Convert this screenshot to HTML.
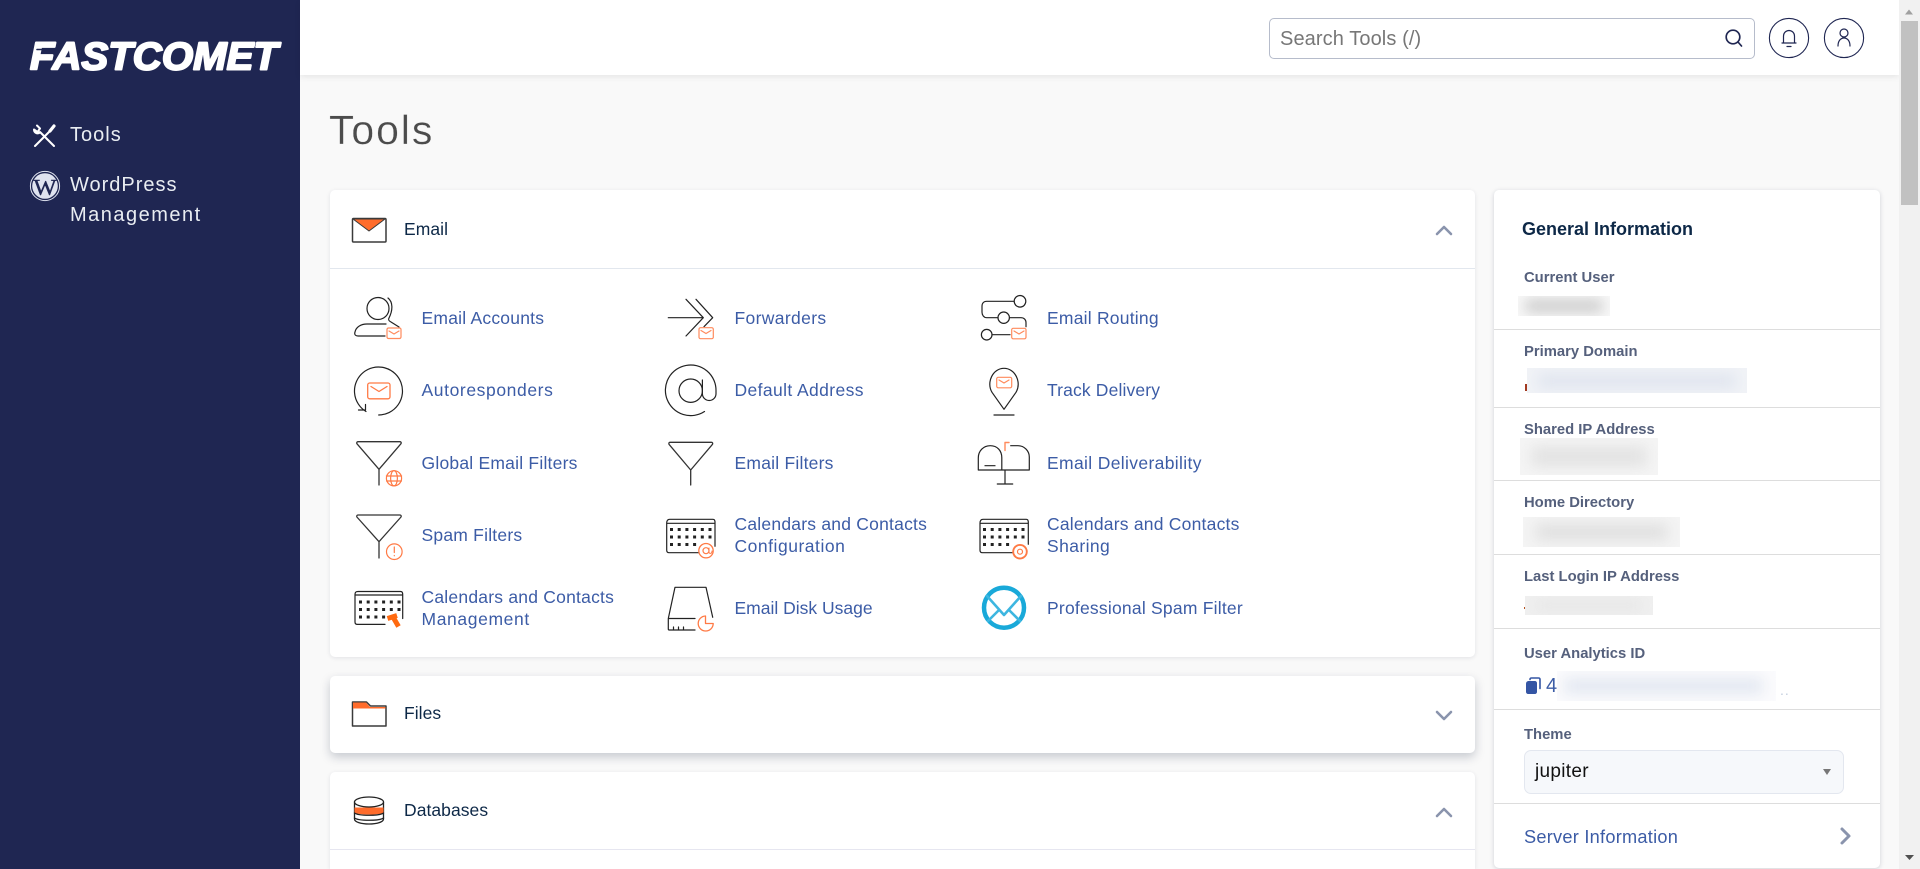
<!DOCTYPE html>
<html lang="en"><head><meta charset="utf-8"><title>Tools</title>
<style>
html,body{margin:0;padding:0;width:1920px;height:869px;overflow:hidden;background:#f9f9f9;font-family:"Liberation Sans",sans-serif}
body{position:relative}
#side{position:absolute;left:0;top:0;width:300px;height:869px;background:#1f2652}
#top{position:absolute;left:300px;top:0;width:1599px;height:75px;background:#fff;box-shadow:0 2px 6px rgba(0,0,0,.08)}
#track{position:absolute;left:1899px;top:0;width:21px;height:869px;background:#f1f1f1}
#thumb{position:absolute;left:1901px;top:21px;width:17px;height:184px;background:#c1c1c1}
.panel{position:absolute;background:#fff;border-radius:5px;box-shadow:0 1px 4px rgba(20,30,60,.1)}
.hr{position:absolute;height:1px;background:#e2e7ee}
.t{position:absolute;white-space:nowrap;line-height:24px;font-size:17.5px;letter-spacing:.22px}
.l{color:#3c5ca6}
.h{color:#0d2847;letter-spacing:.05px}
.s{color:#e9edf2;font-size:20px;letter-spacing:1px}
.k{color:#55607c;font-size:14.8px;font-weight:bold;letter-spacing:0}
.bl{position:absolute;overflow:hidden;background:#f9f9f9}
.bl i{position:absolute;left:8%;right:8%;top:22%;bottom:22%;filter:blur(7px)}
#sel{position:absolute;left:1524px;top:750px;width:318px;height:42px;background:#f6f8fb;border:1px solid #e3e7ef;border-radius:7px}
#search{position:absolute;left:1269px;top:18px;width:484px;height:39px;background:#fff;border:1px solid #b6bccb;border-radius:5px}
svg#ov{position:absolute;left:0;top:0;width:1920px;height:869px;pointer-events:none}
</style></head><body>
<div id="side"></div>
<div id="top"></div>
<div id="search"></div>
<div class="t" style="left:1280px;top:26.500px;font-size:20px;color:#777;letter-spacing:.1px">Search Tools (/)</div>
<div id="track"></div><div id="thumb"></div>

<div class="t s" style="left:70px;top:122.500px">Tools</div>
<div class="t s" style="left:70px;top:172.500px">WordPress</div>
<div class="t s" style="left:70px;top:202.500px;letter-spacing:1.5px">Management</div>

<div class="t" style="left:329px;top:106px;font-size:41px;line-height:48px;color:#4c4c4c;letter-spacing:1.9px;-webkit-text-stroke:.3px #f9f9f9">Tools</div>

<!-- Email panel -->
<div class="panel" style="left:330px;top:190px;width:1145px;height:467px"></div>
<div class="hr" style="left:330px;top:268px;width:1145px"></div>
<div class="t h" style="left:404px;top:216.500px">Email</div>
<div class="t l" style="left:421.500px;top:305.500px">Email Accounts</div>
<div class="t l" style="left:734.500px;top:305.500px;letter-spacing:.35px">Forwarders</div>
<div class="t l" style="left:1047px;top:305.500px">Email Routing</div>
<div class="t l" style="left:421.500px;top:378px;letter-spacing:.6px">Autoresponders</div>
<div class="t l" style="left:734.500px;top:378px;letter-spacing:.39px">Default Address</div>
<div class="t l" style="left:1047px;top:378px;letter-spacing:.14px">Track Delivery</div>
<div class="t l" style="left:421.500px;top:450.500px">Global Email Filters</div>
<div class="t l" style="left:734.500px;top:450.500px">Email Filters</div>
<div class="t l" style="left:1047px;top:450.500px;letter-spacing:.35px">Email Deliverability</div>
<div class="t l" style="left:421.500px;top:523px">Spam Filters</div>
<div class="t l" style="left:734.500px;top:511.500px">Calendars and Contacts</div>
<div class="t l" style="left:734.500px;top:534px;letter-spacing:.52px">Configuration</div>
<div class="t l" style="left:1047px;top:511.500px">Calendars and Contacts</div>
<div class="t l" style="left:1047px;top:534px;letter-spacing:.4px">Sharing</div>
<div class="t l" style="left:421.500px;top:584.500px">Calendars and Contacts</div>
<div class="t l" style="left:421.500px;top:607px;letter-spacing:.62px">Management</div>
<div class="t l" style="left:734.500px;top:596px;letter-spacing:0">Email Disk Usage</div>
<div class="t l" style="left:1047px;top:596px">Professional Spam Filter</div>

<!-- Files -->
<div class="panel" style="left:330px;top:676px;width:1145px;height:77px;box-shadow:0 4px 10px rgba(20,30,60,.22)"></div>
<div class="t h" style="left:404px;top:700.500px">Files</div>
<!-- Databases -->
<div class="panel" style="left:330px;top:772px;width:1145px;height:97px;border-radius:5px 5px 0 0"></div>
<div class="hr" style="left:330px;top:849px;width:1145px;background:#e6e6f0"></div>
<div class="t h" style="left:404px;top:797.500px">Databases</div>

<!-- General information -->
<div class="panel" style="left:1494px;top:190px;width:386px;height:678px;box-shadow:0 1px 5px rgba(20,30,60,.18)"></div>
<div class="t" style="left:1522px;top:216.500px;font-size:18px;font-weight:bold;color:#0d2847;letter-spacing:0">General Information</div>
<div class="t k" style="left:1524px;top:265.500px">Current User</div>
<div class="bl" style="left:1518px;top:296px;width:92px;height:20px"><i style="background:#c6c6c6"></i></div>
<div class="hr" style="left:1494px;top:329px;width:386px;background:#ddd"></div>
<div class="t k" style="left:1524px;top:339.500px">Primary Domain</div>
<div style="position:absolute;left:1525px;top:384px;width:2px;height:7px;background:#a23a20"></div>
<div class="bl" style="left:1527px;top:368px;width:220px;height:25px;background:#f1f3f7"><i style="background:#dfe4ee;left:5%;right:5%"></i></div>
<div class="hr" style="left:1494px;top:407px;width:386px;background:#ddd"></div>
<div class="t k" style="left:1524px;top:417.500px">Shared IP Address</div>
<div class="bl" style="left:1520px;top:438px;width:138px;height:37px;background:#f5f5f5"><i style="background:#e3e3e3"></i></div>
<div class="hr" style="left:1494px;top:480px;width:386px;background:#ddd"></div>
<div class="t k" style="left:1524px;top:490.500px">Home Directory</div>
<div class="bl" style="left:1523px;top:517px;width:157px;height:30px;background:#f4f4f4"><i style="background:#dfdfdf"></i></div>
<div class="hr" style="left:1494px;top:554px;width:386px;background:#ddd"></div>
<div class="t k" style="left:1524px;top:564.500px">Last Login IP Address</div>
<div class="bl" style="left:1525px;top:596px;width:128px;height:19px;background:#f0f0f0"><i style="background:#e6e6e6"></i></div>
<div style="position:absolute;left:1524px;top:607px;width:1px;height:2px;background:#b5521f"></div>
<div class="hr" style="left:1494px;top:628px;width:386px;background:#ddd"></div>
<div class="t k" style="left:1524px;top:641.500px">User Analytics ID</div>
<div class="t" style="left:1546px;top:674px;font-size:20px;color:#3c5ca6">4</div>
<div class="bl" style="left:1557px;top:671px;width:219px;height:30px;background:#fbfbfd"><i style="background:#e3e8f1;left:3%;right:6%"></i></div>
<div class="t" style="left:1780px;top:678px;font-size:14px;color:#c3cede;letter-spacing:1px">..</div>
<div class="hr" style="left:1494px;top:709px;width:386px;background:#ddd"></div>
<div class="t k" style="left:1524px;top:722.500px">Theme</div>
<div id="sel"></div>
<div class="t" style="left:1535px;top:760px;font-size:19px;color:#111;letter-spacing:.3px">jupiter</div>
<div class="hr" style="left:1494px;top:803px;width:386px;background:#ddd"></div>
<div class="t l" style="left:1524px;top:824.500px;font-size:18.2px;letter-spacing:.25px">Server Information</div>

<svg id="ov" viewBox="0 0 1920 869" xmlns="http://www.w3.org/2000/svg" fill="none" stroke-linecap="round" stroke-linejoin="round">
<!-- logo -->
<text x="30" y="69.500" font-family="Liberation Sans" font-weight="bold" font-style="italic" font-size="38.500" fill="#fff" stroke="#fff" stroke-width="2" textLength="248" lengthAdjust="spacingAndGlyphs">FASTCOMET</text>
<path d="M37 49.500H53" stroke="#1f2652" stroke-width="1.600"/>
<!-- tools -->
<g stroke="#fff" stroke-width="2">
<path d="M35 146L50 131"/><path d="M50 131l4-5" stroke-width="3.200"/>
<path d="M40 132L54 146"/><path d="M37 125.500l3 3-2.500 3.500-3.500-2.500c0 3 3 5 6 3"/>
</g>
<!-- wordpress -->
<circle cx="45" cy="186" r="14.600" stroke="#dfe3ef" stroke-width="1"/>
<circle cx="45" cy="186" r="12.800" fill="#dfe3ef"/>
<text x="45" y="194.500" text-anchor="middle" font-family="Liberation Serif" font-size="22" fill="#1f2652" stroke="#1f2652" stroke-width=".4" textLength="23" lengthAdjust="spacingAndGlyphs">W</text>

<!-- search, bell, user -->
<circle cx="1733" cy="37" r="6.800" stroke="#1f2652" stroke-width="1.700"/><path d="M1738 42l3.500 4" stroke="#1f2652" stroke-width="1.700"/>
<circle cx="1789" cy="38" r="19.600" stroke="#1f2652" stroke-width="1.100" fill="#fff"/>
<path d="M1783.500 43v-7a5.500 5.500 0 0 1 11 0v7M1782 43h14M1787 46.500h4" stroke="#1f2652" stroke-width="1.200"/>
<circle cx="1844" cy="38" r="19.600" stroke="#1f2652" stroke-width="1.100" fill="#fff"/>
<circle cx="1844" cy="33" r="4" stroke="#1f2652" stroke-width="1.200"/><path d="M1838 46c0-5 2.500-8 6-8s6 3 6 8" stroke="#1f2652" stroke-width="1.200"/>
<!-- scrollbar arrows -->
<path d="M1905 14.500h8l-4-5z" fill="#a0a0a0"/><path d="M1905 855h9l-4.500 5z" fill="#505050"/>

<!-- chevrons -->
<g stroke="#8a94ad" stroke-width="2.600">
<path d="M1437 234l7-7 7 7"/><path d="M1437 712l7 7 7-7"/><path d="M1437 816l7-7 7 7"/>
<path d="M1842 829l7 7-7 7" stroke-width="3"/>
</g>

<!-- header icons -->
<rect x="352.500" y="218.500" width="33.500" height="23.500" rx="1" fill="#fff" stroke="#3a3a3a" stroke-width="1.500"/>
<path d="M353 219h32l-16 12z" fill="#ff6c2c" stroke="#3a3a3a" stroke-width="1"/>
<path d="M352.500 706v-4h14l4 4h15.500v20h-33.500z" fill="#fff" stroke="#3a3a3a" stroke-width="1.500"/>
<path d="M353 706.500v-4h13l4 4.500h15.500v1.500H353z" fill="#ff6c2c"/>
<g stroke="#222" stroke-width="1.300">
<path d="M354.500 802v17c0 3 6.500 5 14.500 5s14.500-2 14.500-5v-17" fill="#fff"/>
<path d="M354.500 807.500h29v5.500c-5 2-24 2-29 0z" fill="#ff6c2c" stroke="none"/>
<ellipse cx="369" cy="802" rx="14.500" ry="5" fill="#fff"/>
<path d="M354.500 813c4 3 25 3 29 0M354.500 818c4 3 25 3 29 0"/>
</g>

<!-- email accounts -->
<g stroke="#222" stroke-width="1.200">
<circle cx="378" cy="308.500" r="11"/>
<path d="M388 298c5 4 5 12 1 20-1 2 0 3 2 4l8 5M386 324h-19c-6 0-11 3-12 8-1 3 1 4 3 4h27"/>
</g>
<g stroke="#ff8a5c" stroke-width="1.200"><rect x="387" y="328" width="14" height="10.500" rx="1.500"/><path d="M389 331l5 3 5-3"/></g>

<!-- forwarders -->
<g stroke="#222" stroke-width="1.200"><path d="M668.300 317.700h35M686 299.300l17.300 18.400L686 336M696 299.300l16.700 18.400-8.700 9"/></g>
<g stroke="#ff8a5c" stroke-width="1.200"><rect x="699" y="327.700" width="14.300" height="11" rx="1.500"/><path d="M701 330.500l5 3 5-3"/></g>

<!-- routing -->
<g stroke="#222" stroke-width="1.200">
<circle cx="1020" cy="301.300" r="5.800"/><circle cx="1003.700" cy="317.700" r="5.700"/><circle cx="986.700" cy="334.700" r="5.300"/>
<path d="M1014 301.300h-27.300c-3 0-4.700 2-4.700 5v6c0 3 2 5.400 4.700 5.400H998M1009.500 317.700h11.500c3 0 5 2 5 5v4M992 334.700h18"/>
</g>
<g stroke="#ff8a5c" stroke-width="1.200"><rect x="1011.700" y="328.300" width="14.300" height="10.500" rx="1.500"/><path d="M1014 331l5 3 5-3"/></g>

<!-- autoresponders -->
<g stroke="#222" stroke-width="1.200"><path d="M378.700 415A24 24 0 1 0 366 411.500M358.500 410h7v-5.500"/></g>
<g stroke="#ff7a45" stroke-width="1.300"><rect x="367.700" y="383" width="22.300" height="15.800" rx="2"/><path d="M371 386.500l8 5 8-5"/></g>

<!-- @ -->
<g stroke="#222" stroke-width="1.200"><circle cx="690.700" cy="390.700" r="11.700"/><path d="M704.500 411.500A25.300 25.300 0 1 1 716 390.700v3a6.800 6.800 0 0 1-13.600 0V380"/></g>

<!-- pin -->
<g stroke="#222" stroke-width="1.200"><path d="M1004 409.300l-12-17c-6-10 1-24 12-24s18 14 12 24zM994 415h20"/></g>
<g stroke="#ff8a5c" stroke-width="1.200"><rect x="996.700" y="377.300" width="15" height="10.500" rx="1.500"/><path d="M999 380l5 3 5-3"/></g>

<!-- filters -->
<g stroke="#333" stroke-width="1.300">
<path d="M358 441.700h42c1 0 1.500 1 1 2L379 469.300 356.900 443.700c-.4-1 0-2 1.100-2zM379 469.300V485"/>
<path d="M358 515h42c1 0 1.500 1 1 2L379 541.700 356.900 517c-.4-1 0-2 1.100-2zM379 541.700V558"/>
<path d="M670 442.300h41.500c1 0 1.500 1 1 2L690.700 470 669 444.300c-.4-1 0-2 1-2zM690.700 470V485"/>
</g>
<g stroke="#ff7a45" stroke-width="1.200">
<circle cx="394" cy="478.300" r="7.600"/><ellipse cx="394" cy="478.300" rx="3.400" ry="7.600"/><path d="M386.400 476h15.200M386.600 481h14.800"/>
<circle cx="394.300" cy="551.700" r="7.800"/><path d="M394.300 547v5.500M394.300 555.500v.3"/>
</g>

<!-- mailbox -->
<g stroke="#222" stroke-width="1.200"><path d="M978.300 470v-12c0-7 5-12.300 12-12.300s11.500 5 11.500 12V470M978.300 470h51v-13c0-6-5-11.300-11.300-11.300h-7.300M985 465.700h10M1005 470v14M997.300 484h15.400"/></g>
<path d="M1005 450.500v-8h4" stroke="#ff8a5c" stroke-width="1.400"/>

<!-- calendars -->
<g stroke="#222" stroke-width="1.200">
<path d="M666.700 523.300v27c0 1.500 1 2.400 2.400 2.400H700M666.700 523.300c0-3 1-4 3-4H713c1.500 0 2 1 2 3v24M666.700 523.300H715"/>
<path d="M980 523.300v27c0 1.500 1 2.400 2.400 2.400H1012M980 523.300c0-3 1-4 3-4h43.300c1.500 0 2 1 2 3v22M980 523.300h48.300"/>
<path d="M355 595v27c0 1.500 1 2.400 2.400 2.400H385M355 595c0-3 1-3.500 3-3.500h42.700c1.500 0 2 1 2 3v24M355 595h47.700"/>
</g>
<g fill="#222">
<path d="M670 528h3v3h-3zM677.700 528h3v3h-3zM685.400 528h3v3h-3zM693.100 528h3v3h-3zM700.800 528h3v3h-3zM708.500 528h3v3h-3zM670 535.500h3v3h-3zM677.700 535.500h3v3h-3zM685.400 535.500h3v3h-3zM693.100 535.500h3v3h-3zM700.800 535.500h3v3h-3zM708.500 535.500h3v3h-3zM670 543h3v3h-3zM677.700 543h3v3h-3zM685.400 543h3v3h-3zM693.100 543h3v3h-3z"/>
<path d="M983 528h3v3h-3zM990.700 528h3v3h-3zM998.400 528h3v3h-3zM1006.100 528h3v3h-3zM1013.800 528h3v3h-3zM1021.500 528h3v3h-3zM983 535.500h3v3h-3zM990.700 535.500h3v3h-3zM998.400 535.500h3v3h-3zM1006.100 535.500h3v3h-3zM1013.800 535.500h3v3h-3zM1021.500 535.500h3v3h-3zM983 543h3v3h-3zM990.700 543h3v3h-3zM998.400 543h3v3h-3zM1006.100 543h3v3h-3z"/>
<path d="M359 600.500h3v3h-3zM366.700 600.500h3v3h-3zM374.400 600.500h3v3h-3zM382.100 600.500h3v3h-3zM389.800 600.500h3v3h-3zM397.500 600.500h3v3h-3zM359 608h3v3h-3zM366.700 608h3v3h-3zM374.400 608h3v3h-3zM382.100 608h3v3h-3zM389.800 608h3v3h-3zM397.500 608h3v3h-3zM359 615.500h3v3h-3zM366.700 615.500h3v3h-3zM374.400 615.500h3v3h-3zM382.100 615.500h3v3h-3z"/>
</g>
<circle cx="706" cy="550.700" r="7.200" fill="#fff" stroke="#ff7a45" stroke-width="1.300"/><circle cx="706" cy="550.700" r="3" stroke="#ff7a45" stroke-width="1.200"/><path d="M709 548v4c0 2 3 2 3 -1" stroke="#ff7a45" stroke-width="1"/>
<circle cx="1020" cy="551.700" r="6.800" fill="#fff" stroke="#ff7a45" stroke-width="1.900" stroke-dasharray="4 1"/><circle cx="1020" cy="551.700" r="2.500" stroke="#ff7a45" stroke-width="1.200"/>
<path d="M387.500 618.500l9.500-3M393 617l5.500 9.500" stroke="#ff6a10" stroke-width="5" stroke-linecap="butt" stroke-linejoin="miter"/>

<!-- disk -->
<g stroke="#222" stroke-width="1.200"><path d="M668.300 618.500L675 587.300h31l6.700 30M668.300 618.500V629c0 .7.500 1 1 1H695M668.300 618.500H695M673.500 627v3M678.500 627v3M683.500 627v3"/></g>
<path d="M705.500 616a7.500 7.500 0 1 0 7.700 7.500H705.500z" fill="#fff" stroke="#ff7a45" stroke-width="1.300"/>

<!-- pro spam filter -->
<circle cx="1004" cy="607.700" r="20" fill="#fff" stroke="#19a9d9" stroke-width="4.500"/>
<path d="M987 596l17 19 17-19M988 621l11-11M1020 621l-11-11" stroke="#3db6e0" stroke-width="2.600"/>

<!-- copy -->
<path d="M1526 684c0-2 1-3 3-3h6c1 0 2 1 2 2v9c0 1-1 2-2 2h-7c-1 0-2-1-2-2z" fill="#3455a4"/>
<path d="M1530 679.500c0-1 .5-1.500 1.500-1.500h7c1 0 1.500 .5 1.500 1.500v9" stroke="#3455a4" stroke-width="1.600"/>
<!-- select caret -->
<path d="M1823 769h8l-4 6z" fill="#777"/>
</svg>
</body></html>
